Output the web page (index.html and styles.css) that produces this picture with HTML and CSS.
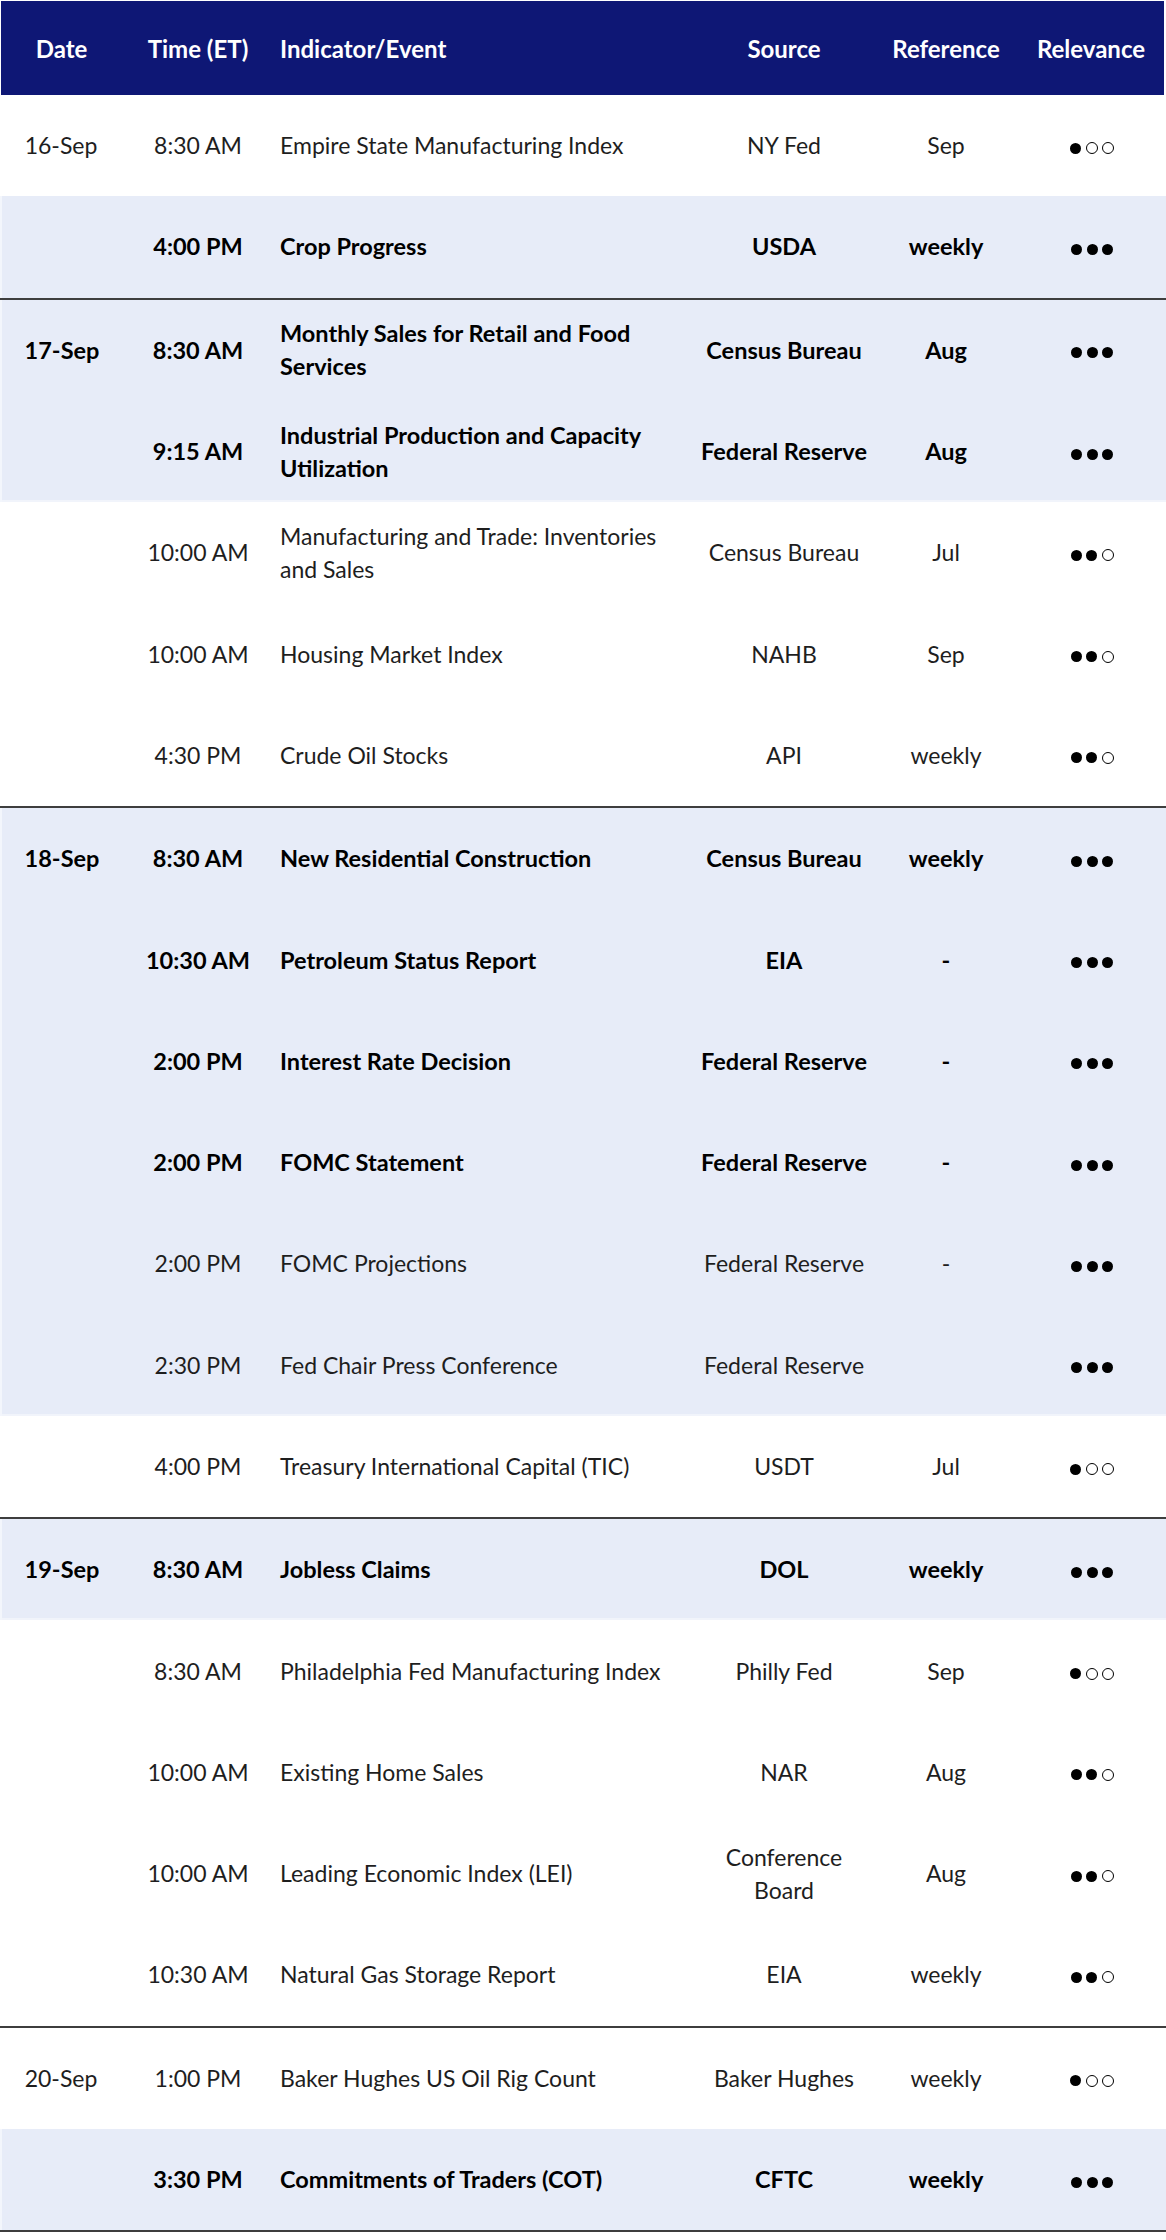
FILE: index.html
```html
<!DOCTYPE html>
<html lang="en">
<head>
<meta charset="utf-8">
<title>Economic Calendar</title>
<link rel="stylesheet" href="styles.css">
</head>
<body>
<div class="cal">
  <div class="row head">
    <div class="c">Date</div>
    <div class="c">Time (ET)</div>
    <div class="c ind">Indicator/Event</div>
    <div class="c">Source</div>
    <div class="c">Reference</div>
    <div class="c">Relevance</div>
  </div>

  <div class="group first">
    <div class="row">
      <div class="c">16-Sep</div><div class="c">8:30 AM</div><div class="c ind">Empire State Manufacturing Index</div><div class="c">NY Fed</div><div class="c">Sep</div>
      <div class="c rel"><span class="dot"></span><span class="dot o"></span><span class="dot o"></span></div>
    </div>
    <div class="row hi b">
      <div class="c"></div><div class="c">4:00 PM</div><div class="c ind">Crop Progress</div><div class="c">USDA</div><div class="c">weekly</div>
      <div class="c rel"><span class="dot"></span><span class="dot"></span><span class="dot"></span></div>
    </div>
  </div>

  <div class="group">
    <div class="row hi b">
      <div class="c">17-Sep</div><div class="c">8:30 AM</div><div class="c ind">Monthly Sales for Retail and Food Services</div><div class="c">Census Bureau</div><div class="c">Aug</div>
      <div class="c rel"><span class="dot"></span><span class="dot"></span><span class="dot"></span></div>
    </div>
    <div class="row hi b last-hi">
      <div class="c"></div><div class="c">9:15 AM</div><div class="c ind">Industrial Production and Capacity Utilization</div><div class="c">Federal Reserve</div><div class="c">Aug</div>
      <div class="c rel"><span class="dot"></span><span class="dot"></span><span class="dot"></span></div>
    </div>
    <div class="row">
      <div class="c"></div><div class="c">10:00 AM</div><div class="c ind">Manufacturing and Trade: Inventories and Sales</div><div class="c">Census Bureau</div><div class="c">Jul</div>
      <div class="c rel"><span class="dot"></span><span class="dot"></span><span class="dot o"></span></div>
    </div>
    <div class="row">
      <div class="c"></div><div class="c">10:00 AM</div><div class="c ind">Housing Market Index</div><div class="c">NAHB</div><div class="c">Sep</div>
      <div class="c rel"><span class="dot"></span><span class="dot"></span><span class="dot o"></span></div>
    </div>
    <div class="row">
      <div class="c"></div><div class="c">4:30 PM</div><div class="c ind">Crude Oil Stocks</div><div class="c">API</div><div class="c">weekly</div>
      <div class="c rel"><span class="dot"></span><span class="dot"></span><span class="dot o"></span></div>
    </div>
  </div>

  <div class="group">
    <div class="row hi b">
      <div class="c">18-Sep</div><div class="c">8:30 AM</div><div class="c ind">New Residential Construction</div><div class="c">Census Bureau</div><div class="c">weekly</div>
      <div class="c rel"><span class="dot"></span><span class="dot"></span><span class="dot"></span></div>
    </div>
    <div class="row hi b">
      <div class="c"></div><div class="c">10:30 AM</div><div class="c ind">Petroleum Status Report</div><div class="c">EIA</div><div class="c">-</div>
      <div class="c rel"><span class="dot"></span><span class="dot"></span><span class="dot"></span></div>
    </div>
    <div class="row hi b">
      <div class="c"></div><div class="c">2:00 PM</div><div class="c ind">Interest Rate Decision</div><div class="c">Federal Reserve</div><div class="c">-</div>
      <div class="c rel"><span class="dot"></span><span class="dot"></span><span class="dot"></span></div>
    </div>
    <div class="row hi b">
      <div class="c"></div><div class="c">2:00 PM</div><div class="c ind">FOMC Statement</div><div class="c">Federal Reserve</div><div class="c">-</div>
      <div class="c rel"><span class="dot"></span><span class="dot"></span><span class="dot"></span></div>
    </div>
    <div class="row hi">
      <div class="c"></div><div class="c">2:00 PM</div><div class="c ind">FOMC Projections</div><div class="c">Federal Reserve</div><div class="c">-</div>
      <div class="c rel"><span class="dot"></span><span class="dot"></span><span class="dot"></span></div>
    </div>
    <div class="row hi last-hi">
      <div class="c"></div><div class="c">2:30 PM</div><div class="c ind">Fed Chair Press Conference</div><div class="c">Federal Reserve</div><div class="c"></div>
      <div class="c rel"><span class="dot"></span><span class="dot"></span><span class="dot"></span></div>
    </div>
    <div class="row">
      <div class="c"></div><div class="c">4:00 PM</div><div class="c ind">Treasury International Capital (TIC)</div><div class="c">USDT</div><div class="c">Jul</div>
      <div class="c rel"><span class="dot"></span><span class="dot o"></span><span class="dot o"></span></div>
    </div>
  </div>

  <div class="group">
    <div class="row hi b last-hi">
      <div class="c">19-Sep</div><div class="c">8:30 AM</div><div class="c ind">Jobless Claims</div><div class="c">DOL</div><div class="c">weekly</div>
      <div class="c rel"><span class="dot"></span><span class="dot"></span><span class="dot"></span></div>
    </div>
    <div class="row">
      <div class="c"></div><div class="c">8:30 AM</div><div class="c ind">Philadelphia Fed Manufacturing Index</div><div class="c">Philly Fed</div><div class="c">Sep</div>
      <div class="c rel"><span class="dot"></span><span class="dot o"></span><span class="dot o"></span></div>
    </div>
    <div class="row">
      <div class="c"></div><div class="c">10:00 AM</div><div class="c ind">Existing Home Sales</div><div class="c">NAR</div><div class="c">Aug</div>
      <div class="c rel"><span class="dot"></span><span class="dot"></span><span class="dot o"></span></div>
    </div>
    <div class="row">
      <div class="c"></div><div class="c">10:00 AM</div><div class="c ind">Leading Economic Index (LEI)</div><div class="c src">Conference Board</div><div class="c">Aug</div>
      <div class="c rel"><span class="dot"></span><span class="dot"></span><span class="dot o"></span></div>
    </div>
    <div class="row">
      <div class="c"></div><div class="c">10:30 AM</div><div class="c ind">Natural Gas Storage Report</div><div class="c">EIA</div><div class="c">weekly</div>
      <div class="c rel"><span class="dot"></span><span class="dot"></span><span class="dot o"></span></div>
    </div>
  </div>

  <div class="group final">
    <div class="row">
      <div class="c">20-Sep</div><div class="c">1:00 PM</div><div class="c ind">Baker Hughes US Oil Rig Count</div><div class="c">Baker Hughes</div><div class="c">weekly</div>
      <div class="c rel"><span class="dot"></span><span class="dot o"></span><span class="dot o"></span></div>
    </div>
    <div class="row hi b">
      <div class="c"></div><div class="c">3:30 PM</div><div class="c ind">Commitments of Traders (COT)</div><div class="c">CFTC</div><div class="c">weekly</div>
      <div class="c rel"><span class="dot"></span><span class="dot"></span><span class="dot"></span></div>
    </div>
  </div>
</div>
</body>
</html>
```

FILE: styles.css
```css
html, body {
  margin: 0;
  padding: 0;
  background: #ffffff;
}

body {
  font-family: Lato, "Liberation Sans", sans-serif;
}

.cal {
  width: 1166px;
  padding-top: 1px;
}

.row {
  display: grid;
  grid-template-columns: 122px 152px 420px 180px 144px 148px;
  align-items: center;
  height: 101.3px;
  font-size: 23px;
  color: #1e1e1e;
}

.row.hi {
  background: #e7ecf8;
  border-left: 2px solid #f3f6fc;
  grid-template-columns: 120px 152px 420px 180px 144px 148px;
}

.row.hi.last-hi {
  box-shadow: inset 0 -2px 0 #f1f4fb;
}

.row.b {
  font-weight: 700;
  font-size: 23.5px;
  color: #000000;
}

.head {
  height: 94px;
  margin: 0 2px 0 1px;
  grid-template-columns: 121px 152px 420px 180px 144px 146px;
  background: #0e1775;
  color: #ffffff;
  font-weight: 700;
  font-size: 24px;
}

.c {
  text-align: center;
  line-height: 33px;
}

.c.ind {
  text-align: left;
  padding: 0 12px 0 6px;
}

.c.src {
  padding: 0 4px;
  width: 150px;
  justify-self: center;
}

.group {
  border-top: 2px solid #3e3e3e;
}

.group.first {
  border-top: 0;
}

.group.final {
  border-bottom: 2px solid #3e3e3e;
}

.rel {
  display: flex;
  justify-content: center;
  align-items: center;
  gap: 4.5px;
  padding-top: 5px;
}

.dot {
  display: block;
  width: 11px;
  height: 11px;
  border-radius: 50%;
  background: #000000;
  box-sizing: border-box;
}

.dot.o {
  width: 12px;
  height: 12px;
  background: transparent;
  border: 1.8px solid #000000;
}
```
